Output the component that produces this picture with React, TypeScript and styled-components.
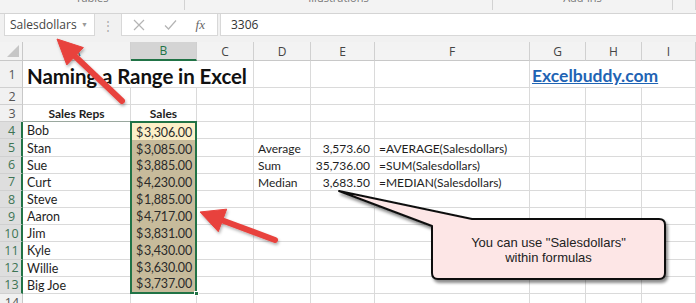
import React from "react";
import styled, { createGlobalStyle, css } from "styled-components";

const Global = createGlobalStyle`
  html, body { margin: 0; padding: 0; background: #fff; }
  * { box-sizing: border-box; }
`;

const GREEN = "#217346";
const GRID = "#dadada";
const CELL_FONT = `"Lato", "Carlito", "Liberation Sans", sans-serif`;
const UI_FONT = `"Open Sans", "Noto Sans", sans-serif`;

const Root = styled.div`
  position: relative;
  width: 696px;
  height: 303px;
  overflow: hidden;
  display: flex;
  flex-direction: column;
  background: #fff;
`;

const Ribbon = styled.div`
  height: 14px;
  flex: none;
  display: flex;
  background: #f3f3f3;
  border-bottom: 1px solid #d4d4d4;
  overflow: hidden;
`;

const RibbonGroup = styled.div<{ $w?: number }>`
  ${(p) => (p.$w ? css`width: ${p.$w}px; flex: none;` : css`flex: 1;`)}
  border-right: 1px solid #d2d2d2;
  display: flex;
  justify-content: center;
  align-items: flex-start;
  margin: 0 0 3px;
`;

const RibbonLabel = styled.span`
  font: 11px ${UI_FONT};
  line-height: 14px;
  color: #777;
  margin-top: -9px;
`;

const FormulaBar = styled.div`
  height: 28px;
  flex: none;
  display: flex;
  align-items: flex-start;
  background: #f1f1f1;
  padding-left: 4px;
`;

const NameBox = styled.div`
  width: 91px;
  height: 22px;
  background: #fff;
  border: 1px solid #d8d8d8;
  border-top: none;
  display: flex;
  align-items: center;
  justify-content: space-between;
  padding: 0 6px 0 5px;
  font: 12px ${UI_FONT};
  color: #444;
`;

const Caret = styled.span`
  font-size: 7px;
  color: #999;
`;

const Dots = styled.div`
  width: 26px;
  height: 22px;
  display: flex;
  align-items: center;
  justify-content: center;
  color: #aaa;
  font: 12px ${UI_FONT};
`;

const IconBox = styled.div`
  width: 97px;
  height: 22px;
  background: #fff;
  border: 1px solid #d8d8d8;
  border-top: none;
  display: flex;
  align-items: center;
  justify-content: space-between;
  padding: 0 12px 0 11px;
`;

const Fx = styled.span`
  font: italic 13px "Liberation Serif", serif;
  color: #666;
`;

const FormulaInput = styled.div`
  flex: 1;
  height: 22px;
  margin-left: 2px;
  background: #fff;
  border-bottom: 1px solid #d8d8d8;
  border-left: 1px solid #d8d8d8;
  display: flex;
  align-items: center;
  padding-left: 10px;
  font: 12px ${UI_FONT};
  color: #333;
`;

const Sheet = styled.div`
  flex: 1;
  display: grid;
  grid-template-columns: 23px 108px 66px 57px 57px 64px 155px 56px 56px 1fr;
  grid-template-rows: 19px 27px repeat(12, 17.17px) 1fr;
  font-family: ${CELL_FONT};
`;

const Corner = styled.div`
  background: #f3f3f3;
  border-right: 1px solid #c8c8c8;
  border-bottom: 1px solid #c8c8c8;
  position: relative;
  &::after {
    content: "";
    position: absolute;
    right: 3px;
    bottom: 3px;
    border-left: 12px solid transparent;
    border-bottom: 12px solid #c6c6c6;
  }
`;

const ColHead = styled.div<{ $sel?: boolean }>`
  display: flex;
  align-items: center;
  justify-content: center;
  font: 12px ${UI_FONT};
  color: ${(p) => (p.$sel ? GREEN : "#444")};
  background: ${(p) => (p.$sel ? "#d4d4d4" : "#f3f3f3")};
  border-right: 1px solid #d0d0d0;
  border-bottom: ${(p) => (p.$sel ? `2px solid ${GREEN}` : "1px solid #c8c8c8")};
`;

const RowHead = styled.div<{ $sel?: boolean }>`
  display: flex;
  align-items: center;
  justify-content: center;
  font: 12.5px ${UI_FONT};
  color: ${(p) => (p.$sel ? "#3d7454" : "#555")};
  background: ${(p) => (p.$sel ? "#dedede" : "#f1f1f1")};
  border-bottom: 1px solid #d0d0d0;
  border-right: ${(p) => (p.$sel ? `2px solid ${GREEN}` : "1px solid #c8c8c8")};
  padding-left: 2px;
`;

type Align = "left" | "right" | "center";

const Cell = styled.div<{ $align?: Align; $bold?: boolean; $span?: number; $rule?: boolean; $big?: boolean }>`
  display: flex;
  align-items: center;
  justify-content: ${(p) =>
    p.$align === "right" ? "flex-end" : p.$align === "center" ? "center" : "flex-start"};
  padding: 1px 4px 0 4px;
  font-size: ${(p) => (p.$big ? "12.5px" : "12px")};
  font-weight: ${(p) => (p.$bold ? 700 : 400)};
  color: #1e1e1e;
  white-space: nowrap;
  border-right: 1px solid ${GRID};
  border-bottom: 1px solid ${(p) => (p.$rule ? "#9aa89f" : GRID)};
  overflow: visible;
  ${(p) => p.$span && css`grid-column: span ${p.$span};`}
`;

const Title = styled(Cell)`
  font-size: 20.5px;
  font-weight: 700;
  color: #111;
  padding-top: 3px;
  letter-spacing: -0.1px;
`;

const Link = styled(Cell)`
  font-size: 17.5px;
  font-weight: 700;
  color: #1f64b4;
  text-decoration: underline;
  padding: 2px 0 0 2px;
`;

const Selection = styled.div`
  grid-column: 3;
  grid-row: 5 / span 10;
  position: relative;
  display: flex;
  flex-direction: column;
  border: 2px solid ${GREEN};
  margin: -1px 0 0 -1px;
`;

const Money = styled.div<{ $first?: boolean }>`
  flex: 1;
  display: flex;
  align-items: center;
  justify-content: space-between;
  padding: 1px 3px 0 4px;
  font-size: 12.5px;
  color: #2a2a2a;
  background: ${(p) => (p.$first ? "#fcefc8" : "#c7bb9b")};
`;

const Amount = styled.span`
  letter-spacing: -0.15px;
`;

const Handle = styled.span`
  position: absolute;
  right: -4px;
  bottom: -4px;
  width: 5px;
  height: 5px;
  background: ${GREEN};
  border: 1px solid #fff;
`;

const Overlay = styled.svg`
  position: absolute;
  left: 0;
  top: 0;
  pointer-events: none;
`;

const CalloutText = styled.div`
  position: absolute;
  left: 432px;
  top: 219px;
  width: 233px;
  height: 60px;
  display: flex;
  flex-direction: column;
  align-items: center;
  justify-content: center;
  font: 13px "Liberation Sans", Arial, sans-serif;
  line-height: 15px;
  color: #222;
  text-align: center;
  padding-top: 1px;
`;

const COLS = ["A", "B", "C", "D", "E", "F", "G", "H", "I"];

type CellData = { text: string; align?: Align; bold?: boolean; big?: boolean };

const cells: Record<string, CellData> = {
  A3: { text: "Sales Reps", align: "center", bold: true },
  B3: { text: "Sales", align: "center", bold: true },
  D5: { text: "Average" },
  E5: { text: "3,573.60", align: "right" },
  F5: { text: "=AVERAGE(Salesdollars)" },
  D6: { text: "Sum" },
  E6: { text: "35,736.00", align: "right" },
  F6: { text: "=SUM(Salesdollars)" },
  D7: { text: "Median" },
  E7: { text: "3,683.50", align: "right" },
  F7: { text: "=MEDIAN(Salesdollars)" },
};

const reps = [
  ["Bob", "3,306.00"],
  ["Stan", "3,085.00"],
  ["Sue", "3,885.00"],
  ["Curt", "4,230.00"],
  ["Steve", "1,885.00"],
  ["Aaron", "4,717.00"],
  ["Jim", "3,831.00"],
  ["Kyle", "3,430.00"],
  ["Willie", "3,630.00"],
  ["Big Joe", "3,737.00"],
];
reps.forEach(([n], i) => {
  cells[`A${i + 4}`] = { text: n, big: true };
});

function arrow(tail: [number, number], tip: [number, number], len: number, half: number) {
  const dx = tip[0] - tail[0];
  const dy = tip[1] - tail[1];
  const d = Math.hypot(dx, dy);
  const ux = dx / d;
  const uy = dy / d;
  const nx = -uy;
  const ny = ux;
  const bx = tip[0] - ux * len;
  const by = tip[1] - uy * len;
  return {
    shaft: `M${tail[0]},${tail[1]} L${bx + ux * 2},${by + uy * 2}`,
    head: `${tip[0]},${tip[1]} ${bx + nx * half},${by + ny * half} ${bx - nx * half},${by - ny * half}`,
  };
}

const a1 = arrow([122, 101], [57, 39], 25, 12);
const a2 = arrow([275, 240], [200, 212], 24, 12);

export default function App() {
  const rows: React.ReactNode[] = [];
  for (let r = 1; r <= 14; r++) {
    const sel = r >= 4 && r <= 13;
    rows.push(
      <RowHead key={`h${r}`} $sel={sel}>
        {r}
      </RowHead>
    );
    if (r === 1) {
      rows.push(
        <Title key="title" $span={3}>
          Naming a Range in Excel
        </Title>
      );
      rows.push(<Cell key="D1" />);
      rows.push(<Cell key="E1" />);
      rows.push(<Cell key="F1" />);
      rows.push(
        <Link key="link" $span={3}>
          Excelbuddy.com
        </Link>
      );
      continue;
    }
    COLS.forEach((c) => {
      if (c === "B" && sel) return;
      const d = cells[`${c}${r}`];
      rows.push(
        <Cell
          key={`${c}${r}`}
          $align={d?.align}
          $bold={d?.bold}
          $big={d?.big}
          $rule={r === 3 && c === "A"}
        >
          {d?.text}
        </Cell>
      );
    });
  }

  return (
    <Root>
      <Global />
      <Ribbon>
        <RibbonGroup $w={185}>
          <RibbonLabel>Tables</RibbonLabel>
        </RibbonGroup>
        <RibbonGroup $w={308}>
          <RibbonLabel>Illustrations</RibbonLabel>
        </RibbonGroup>
        <RibbonGroup $w={180}>
          <RibbonLabel>Add-ins</RibbonLabel>
        </RibbonGroup>
        <RibbonGroup />
      </Ribbon>
      <FormulaBar>
        <NameBox>
          <span>Salesdollars</span>
          <Caret>▼</Caret>
        </NameBox>
        <Dots>⋮</Dots>
        <IconBox>
          <svg width="12" height="12" viewBox="0 0 12 12">
            <path d="M1 1 L11 11 M11 1 L1 11" stroke="#b4b4b4" strokeWidth="1.2" fill="none" />
          </svg>
          <svg width="13" height="12" viewBox="0 0 13 12">
            <path d="M1 6.5 L4.5 10 L12 1.5" stroke="#b4b4b4" strokeWidth="1.2" fill="none" />
          </svg>
          <Fx>fx</Fx>
        </IconBox>
        <FormulaInput>3306</FormulaInput>
      </FormulaBar>
      <Sheet>
        <Corner />
        {COLS.map((c) => (
          <ColHead key={c} $sel={c === "B"}>
            {c}
          </ColHead>
        ))}
        {rows}
        <Selection>
          {reps.map(([, v], i) => (
            <Money key={i} $first={i === 0}>
              <span>$</span>
              <Amount>{v}</Amount>
            </Money>
          ))}
          <Handle />
        </Selection>
      </Sheet>

      <Overlay width="696" height="303" viewBox="0 0 696 303">
        <defs>
          <filter id="sh" x="-20%" y="-20%" width="140%" height="140%">
            <feDropShadow dx="2" dy="3" stdDeviation="1.6" floodColor="#000" floodOpacity="0.45" />
          </filter>
          <filter id="ash" x="-20%" y="-20%" width="140%" height="140%">
            <feDropShadow dx="1" dy="2" stdDeviation="1.5" floodColor="#000" floodOpacity="0.3" />
          </filter>
        </defs>
        <g filter="url(#ash)" fill="#e8423d" stroke="#e8423d">
          <path d={a1.shaft} strokeWidth="6" strokeLinecap="round" fill="none" />
          <polygon points={a1.head} strokeWidth="1" strokeLinejoin="round" />
          <path d={a2.shaft} strokeWidth="6" strokeLinecap="round" fill="none" />
          <polygon points={a2.head} strokeWidth="1" strokeLinejoin="round" />
        </g>
        <path
          filter="url(#sh)"
          d="M339,191 L472,219 L659,219 Q665,219 665,225 L665,273 Q665,279 659,279 L438,279 Q432,279 432,273 L432,226 Z"
          fill="#fde6e6"
          stroke="#111"
          strokeWidth="2"
          strokeLinejoin="round"
        />
      </Overlay>
      <CalloutText>
        <span>You can use "Salesdollars"</span>
        <span>within formulas</span>
      </CalloutText>
    </Root>
  );
}
